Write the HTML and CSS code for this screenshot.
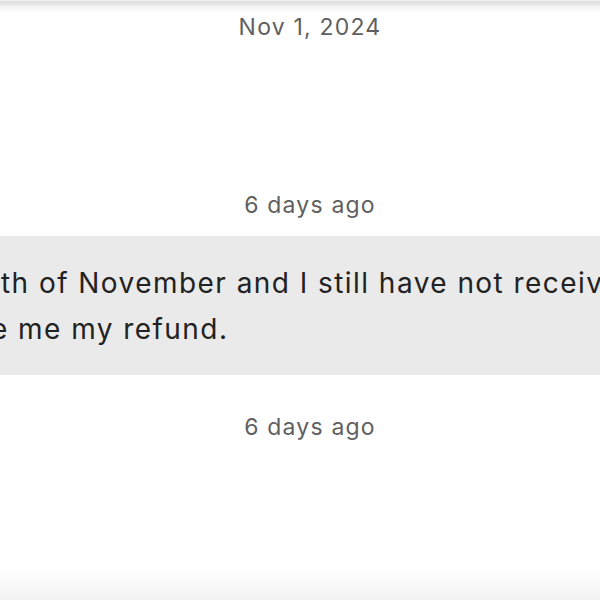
FILE: index.html
```html
<!DOCTYPE html>
<html>
<head>
<meta charset="utf-8">
<link rel="stylesheet" href="styles.css">
</head>
<body>
<div class="page">
  <div class="thread">
    <div class="stamp date">Nov 1, 2024</div>
    <div class="stamp first">6 days ago</div>
  </div>
  <div class="bubble">
    <span class="line l1">th of November and I still have not received my order.</span>
    <span class="line l2">e me my refund.</span>
  </div>
  <div class="thread">
    <div class="stamp last">6 days ago</div>
  </div>
</div>
</body>
</html>
```
FILE: styles.css
```css
html, body {
  margin: 0;
  padding: 0;
}
body {
  width: 600px;
  height: 600px;
  overflow: hidden;
  font-family: Inter, "Open Sans", sans-serif;
  background:
    linear-gradient(to bottom, #f4f4f4 0px, #dedede 2px, #f3f3f3 7px, #ffffff 14px, #ffffff 570px, #f2f2f2 600px);
}
.page {
  display: flex;
  flex-direction: column;
}
.thread {
  display: flex;
  flex-direction: column;
  align-items: center;
  padding-left: 20px;
}
.stamp {
  font-size: 23px;
  line-height: 30px;
  letter-spacing: 1.2px;
  color: #5f5f5f;
}
.date {
  margin-top: 12px;
}
.first {
  margin-top: 148px;
  margin-bottom: 16px;
}
.last {
  margin-top: 37px;
}
.bubble {
  background: #eaeaea;
  padding: 24px 0 23px;
  display: flex;
  flex-direction: column;
  overflow: hidden;
}
.line {
  display: block;
  white-space: nowrap;
  font-size: 28px;
  line-height: 46px;
  letter-spacing: 1.45px;
  color: #222222;
}
.l1 {
  margin-left: 1px;
}
.l2 {
  margin-left: -9px;
}
```
